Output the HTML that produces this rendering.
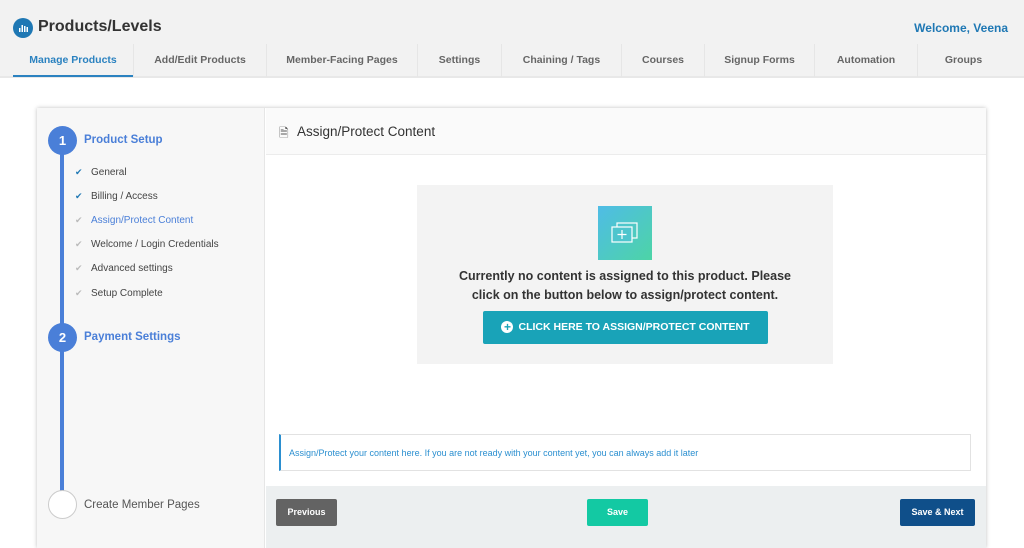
<!DOCTYPE html>
<html><head><style>
*{margin:0;padding:0;box-sizing:border-box}
body{width:1024px;height:539px;background:#fff;font-family:"Liberation Sans",sans-serif;position:relative;overflow:hidden}
.top{position:absolute;left:0;top:0;width:1024px;height:78px;background:#f2f2f2;border-bottom:2px solid #e8e8e8}
.title{position:absolute;left:38px;top:18px;font-size:16px;font-weight:bold;color:#333}
.logo{position:absolute;left:13px;top:18px;width:20px;height:20px;border-radius:50%;background:#1f78b4}
.welcome{position:absolute;right:16px;top:21px;font-size:12px;font-weight:bold;color:#1f78b4}
.tab{position:absolute;top:44px;height:33px;line-height:32px;font-size:10.5px;font-weight:bold;color:#666;text-align:center;border-right:1px solid #e6e6e6}
.tab.act{color:#2b82c0;border-bottom:2px solid #2b82c0}
.card{position:absolute;left:37px;top:108px;width:949px;height:440px;background:#fff;box-shadow:0 0 4px rgba(0,0,0,.25)}
.side{position:absolute;left:0;top:0;width:228px;height:440px;background:#f7f7f7;border-right:1px solid #e6e6e6}
.line{position:absolute;left:23px;top:32px;width:4px;height:360px;background:#4a7fd8}
.circ{position:absolute;left:11px;width:29px;height:29px;border-radius:50%;background:#4a7fd8;color:#fff;font-weight:bold;font-size:13px;text-align:center;line-height:29px}
.step{position:absolute;left:47px;font-size:11.5px;font-weight:bold;color:#4a7fd8}
.sub{position:absolute;left:38px;font-size:10px;color:#444}
.sub i{font-style:normal;display:inline-block;width:16px;font-size:9px;color:#bbb}
.sub i.ok{color:#1f78b4}
.hdr{position:absolute;left:229px;top:0;width:720px;height:47px;background:#fafafa;border-bottom:1px solid #ececec;font-size:13.5px;color:#333;padding:16px 0 0 31px}
.box{position:absolute;left:380px;top:77px;width:416px;height:179px;background:#f3f3f3;text-align:center}
.ico{position:absolute;left:181px;top:21px;width:54px;height:54px;background:linear-gradient(135deg,#4fbce6,#4dd4a6)}
.msg{position:absolute;left:0;top:82px;width:416px;font-size:12.5px;font-weight:bold;color:#333;line-height:19px}
.btn{position:absolute;left:66px;top:126px;width:285px;height:33px;background:#19a3b8;border-radius:2px;color:#fff;font-size:10.5px;font-weight:bold;line-height:33px}
.note{position:absolute;left:242px;top:326px;width:692px;height:37px;border:1px solid #e2e2e2;border-left:2px solid #2b8fd0;font-size:9px;color:#2b8fd0;padding:13px 0 0 8px}
.foot{position:absolute;left:229px;top:378px;width:720px;height:62px;background:#eceff0}
.fb{position:absolute;top:13px;height:27px;line-height:27px;color:#fff;font-size:9px;font-weight:bold;text-align:center;border-radius:2px}
</style></head><body>
<div class="top">
<div class="logo"><svg width="20" height="20"><rect x="6" y="10" width="1.5" height="4" fill="#fff"/><rect x="8.5" y="7" width="1.5" height="7" fill="#fff"/><rect x="11" y="8" width="1.5" height="6" fill="#fff"/><rect x="13.5" y="9" width="1.5" height="5" fill="#fff"/></svg></div>
<div class="title">Products/Levels</div>
<div class="welcome">Welcome, Veena</div>
<div class="tab act" style="left:13px;width:120px;border-right:none">Manage Products</div>
<div class="tab" style="left:133px;width:134px;border-left:1px solid #e6e6e6">Add/Edit Products</div>
<div class="tab" style="left:267px;width:151px">Member-Facing Pages</div>
<div class="tab" style="left:418px;width:84px">Settings</div>
<div class="tab" style="left:502px;width:120px">Chaining / Tags</div>
<div class="tab" style="left:622px;width:83px">Courses</div>
<div class="tab" style="left:705px;width:110px">Signup Forms</div>
<div class="tab" style="left:815px;width:103px">Automation</div>
<div class="tab" style="left:918px;width:91px;border-right:none">Groups</div>
</div>
<div class="card">
<div class="side">
<div class="line"></div>
<div class="circ" style="top:18px">1</div><div class="step" style="top:26px">Product Setup</div>
<div class="sub" style="top:59px"><i class="ok">✔</i>General</div>
<div class="sub" style="top:83px"><i class="ok">✔</i>Billing / Access</div>
<div class="sub" style="top:107px;color:#4a7fd8"><i>✔</i>Assign/Protect Content</div>
<div class="sub" style="top:131px"><i>✔</i>Welcome / Login Credentials</div>
<div class="sub" style="top:155px"><i>✔</i>Advanced settings</div>
<div class="sub" style="top:180px"><i>✔</i>Setup Complete</div>
<div class="circ" style="top:215px">2</div><div class="step" style="top:223px">Payment Settings</div>
<div class="circ" style="top:382px;background:#fff;border:1px solid #ccc;width:29px;height:29px"></div>
<div class="step" style="top:391px;color:#555;font-weight:normal">Create Member Pages</div>
</div>
<div class="hdr"><span style="position:absolute;left:13px;top:16px;font-size:12px;color:#555">🗎</span>Assign/Protect Content</div>
<div class="box">
<div class="ico"><svg width="54" height="54" fill="none" stroke="#fff" stroke-width="1.2"><rect x="19" y="17" width="20" height="15"/><rect x="14" y="21" width="20" height="15" fill="#4ec5cd"/><path d="M24 24v9M19.5 28.5h9"/></svg></div>
<div class="msg">Currently no content is assigned to this product. Please<br>click on the button below to assign/protect content.</div>
<div class="btn"><span style="display:inline-block;width:12px;height:12px;border-radius:50%;background:#fff;color:#19a3b8;line-height:12px;font-size:12px;vertical-align:-1px;margin-right:5px">+</span>CLICK HERE TO ASSIGN/PROTECT CONTENT</div>
</div>
<div class="note">Assign/Protect your content here. If you are not ready with your content yet, you can always add it later</div>
<div class="foot">
<div class="fb" style="left:10px;width:61px;background:#636363">Previous</div>
<div class="fb" style="left:321px;width:61px;background:#13c9a3">Save</div>
<div class="fb" style="left:634px;width:75px;background:#0f4f8a">Save &amp; Next</div>
</div>
</div>
</body></html>
